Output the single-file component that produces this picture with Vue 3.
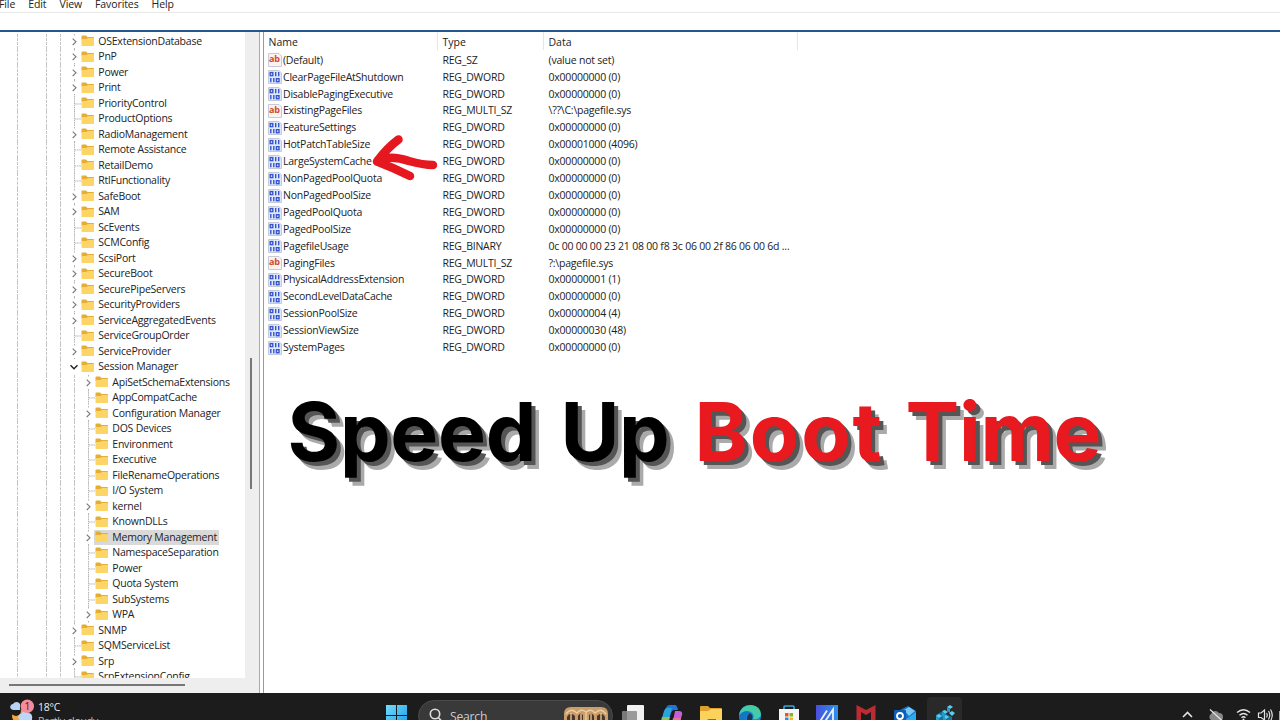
<template>
  <div class="screen">
    <!-- Menu -->
    <nav class="menu">
      <span v-for="m in menu" :key="m">{{ m }}</span>
    </nav>
    <div class="address"></div>

    <main class="panes">
      <!-- Key tree -->
      <aside class="left">
        <div class="tree-wrap">
          <div class="tree">
            <div v-for="(k, i) in keys" :key="i" class="key">
              <i class="guide wide"></i>
              <i class="guide"></i>
              <i class="guide"></i>
              <i v-if="k.child" class="guide"></i>
              <svg class="node" viewBox="0 0 14 15.51">
                <path v-if="k.state === 'open'" d="M3.5 6.2L7 9.7L10.5 6.2" class="chev open" />
                <template v-else-if="k.state === 'closed'">
                  <path d="M7.5 0v1.5M7.5 14v1.5" class="dots" />
                  <path d="M5.7 4.6L9 7.8L5.7 11" class="chev" />
                </template>
                <path v-else d="M7.5 0V15.5M8 8H14" class="dots" />
              </svg>
              <span class="label" :class="{ selected: k.name === 'Memory Management' }">
                <svg class="folder" viewBox="0 0 14 12">
                  <path d="M.5 1.3Q.5 .5 1.3 .5H5L6.5 2H12.2Q13 2 13 2.8V5H.5Z" fill="#e6ad35" />
                  <path d="M.5 4H5.5L6.8 3H12.2Q13 3 13 3.8V10.2Q13 11 12.2 11H1.3Q.5 11 .5 10.2Z" fill="#fdd566" />
                </svg>
                {{ k.name }}
              </span>
            </div>
          </div>
          <div class="vscroll"><div class="thumb"></div></div>
        </div>
        <div class="hscroll"><div class="thumb"></div></div>
      </aside>

      <!-- Values -->
      <section class="right">
        <div class="row head">
          <span>Name</span>
          <span>Type</span>
          <span>Data</span>
        </div>
        <div v-for="v in values" :key="v[0]" class="row">
          <span class="name">
            <svg class="vicon" viewBox="0 0 14 14">
              <path d="M.5 .5H11L13.5 3V13.5H.5Z" :fill="isText(v) ? '#fbf3f0' : '#dfe8fb'" stroke="#c5cad6" />
              <text v-if="isText(v)" x="1" y="9.3" class="ab">ab</text>
              <g v-else fill="none" stroke="#3555d0" stroke-width="1.4">
                <rect x="2.2" y="2.6" width="2.6" height="3" />
                <path d="M7.7 2V6.3M10.7 2V6.3M2.8 8V12.3M5.8 8V12.3" />
                <rect x="8.4" y="8.7" width="2.6" height="3" />
              </g>
            </svg>
            {{ v[0] }}
          </span>
          <span>{{ v[1] }}</span>
          <span class="data">{{ v[2] }}</span>
        </div>
      </section>
    </main>

    <!-- Taskbar -->
    <footer class="taskbar">
      <div class="weather">
        <svg width="26" height="22" viewBox="0 0 26 22">
          <circle cx="9" cy="17" r="7" fill="#f5a63b" />
          <circle cx="6" cy="12" r="5" fill="#1c1c1c" />
          <path d="M1 10a3 3 0 0 1 2-5a4 4 0 0 1 7 0v6H3z" fill="#b9d3f4" />
          <path d="M9 20a3 3 0 0 1 2-5a5 5 0 0 1 8-1q4 1 3 6v2H11z" fill="#bcd6f7" />
          <circle cx="17.3" cy="7.3" r="6.7" fill="#f58b9b" />
          <text x="14.5" y="11" class="badge">1</text>
        </svg>
        <div class="forecast">
          <div>18°C</div>
          <div class="dim">Partly cloudy</div>
        </div>
      </div>

      <svg class="start" viewBox="0 0 21 21">
        <defs>
          <linearGradient id="win" x1="0" y1="0" x2="1" y2="1">
            <stop offset="0" stop-color="#73dcfb" />
            <stop offset="1" stop-color="#179be8" />
          </linearGradient>
        </defs>
        <path d="M0 0H10V10H0ZM11 0H21V10H11ZM0 11H10V21H0ZM11 11H21V21H11Z" fill="url(#win)" />
      </svg>

      <div class="search">
        <svg width="16" height="16" viewBox="0 0 16 16" fill="none" stroke="#ddd" stroke-width="1.6">
          <circle cx="7" cy="6" r="4.7" />
          <path d="M10.3 9.5L14 13.5" />
        </svg>
        <span>Search</span>
        <svg class="arch" width="46" height="22" viewBox="0 0 46 22">
          <path d="M1 22V8Q1 1 8 1H38Q45 1 45 8V22Z" fill="#c99d6c" />
          <path d="M4 22V11Q7 5 12 10V22ZM15 22V10Q17 6 20 9V22ZM26 22V9Q29 6 31 10V22ZM34 22V10Q39 5 42 11V22Z" fill="#4f3525" />
          <path d="M3 8Q8 1 14 7Q18 2 23 6Q28 2 32 7Q38 1 43 8M8 7V22M18 8V22M23 6V22M28 8V22M38 7V22" fill="none" stroke="#efcf9e" stroke-width="1.3" />
        </svg>
      </div>

      <div class="apps">
        <div class="app">
          <svg viewBox="0 0 22 22">
            <rect x="5" y="0" width="17" height="16" rx="1" fill="#f1f1f1" />
            <rect x="0" y="6" width="15" height="14" rx="1" fill="#8b8b8b" fill-opacity=".85" />
          </svg>
        </div>
        <div class="app">
          <svg viewBox="0 0 22 22">
            <path d="M5 3Q6 0 9 0H14Q16 0 17 5H13Q11 5 10 8L9 12H2Z" fill="#2473dd" />
            <path d="M3 6Q4 3 6 3H11L8 13H1Z" fill="#2aa5d9" />
            <path d="M1 12H9L7 20H3Q-1 18 1 12Z" fill="#8dc35f" />
            <path d="M14 6H18Q22 6 21 10L18 20H8Q11 20 12 16Z" fill="#c45fd6" />
            <path d="M12 13H20L18 21H8Q11 20 12 13Z" fill="#f0709a" />
          </svg>
        </div>
        <div class="app">
          <svg viewBox="0 0 22 22">
            <path d="M0 2Q0 1 1 1H8L10 3H21Q22 3 22 4V8H0Z" fill="#dfa02b" />
            <path d="M0 6H8L11 4H22V22H0Z" fill="#fdd25b" />
            <path d="M7 18V16Q7 14 9 14H16V22H7Z" fill="#2b83c9" />
          </svg>
        </div>
        <div class="app">
          <svg viewBox="0 0 22 22">
            <circle cx="11" cy="11" r="11" fill="#1689d5" />
            <path d="M0 10Q2 0 12 0Q22 1 22 10Q20 15 14 14Q16 10 12 7Q6 4 0 10Z" fill="#45cba5" />
            <path d="M0 11Q5 4 11 8Q7 9 7 15L9 22Q1 20 0 11Z" fill="#1277c6" />
            <path d="M11 8Q6 11 9 17Q14 21 20 16Q14 18 13 14Q15 11 11 8Z" fill="#1d3559" />
          </svg>
        </div>
        <div class="app">
          <svg viewBox="0 0 22 22">
            <path d="M6 5V2Q6 1 7 1H15Q16 1 16 2V5" fill="none" stroke="#36a6df" stroke-width="1.6" />
            <path d="M1 4H21V22H1Z" fill="#f5f5f5" />
            <path d="M7 8H10.5V11.5H7Z" fill="#f05128" />
            <path d="M11.5 8H15V11.5H11.5Z" fill="#7cb928" />
            <path d="M7 12.5H10.5V16H7Z" fill="#2094dc" />
            <path d="M11.5 12.5H15V16H11.5Z" fill="#f9b817" />
          </svg>
        </div>
        <div class="app">
          <svg viewBox="0 0 22 22">
            <defs>
              <linearGradient id="asus" x1="0" y1="0" x2="1" y2="0">
                <stop offset="0" stop-color="#4a4fdc" />
                <stop offset="1" stop-color="#2a92ee" />
              </linearGradient>
            </defs>
            <rect width="22" height="22" fill="url(#asus)" />
            <path d="M3 18L11 5.5M8 18L17 4.500V18" fill="none" stroke="#e9f2ff" stroke-width="1.8" />
          </svg>
        </div>
        <div class="app">
          <svg viewBox="0 0 22 22">
            <path d="M1.5 0L11 5L20.5 0V18L11 22L1.5 18ZM6 7V15L11 18L16 15V7L11 10Z" fill="#bd2b32" fill-rule="evenodd" />
          </svg>
        </div>
        <div class="app">
          <svg viewBox="0 0 22 22">
            <path d="M4 6L14 1L22 6V20H4Z" fill="#1975c7" />
            <path d="M10 5L15 2L21 6L15 11Z" fill="#73c9f5" />
            <path d="M11 15L22 7V22H8Z" fill="#2da9ee" />
            <rect x="0" y="5" width="12" height="13" rx="1" fill="#0d5eb6" />
            <circle cx="6" cy="11" r="3" fill="none" stroke="#fff" stroke-width="1.8" />
          </svg>
        </div>
        <div class="app active">
          <svg viewBox="0 0 22 22">
            <path d="M3 10L8 7L13 9L19 12V22H3Z" fill="#15739f" />
            <path d="M9 6L12 5L15 7L12 9ZM3 11L6 9L9 11L6 13ZM10 12L13 10L16 12L13 14ZM14 2L17 0L20 2L17 4ZM16 8L19 6L22 8L19 11Z" fill="#5ccdf1" />
            <path d="M9 6L12 9V13L9 11ZM14 2L17 4V8L14 6ZM10 12L13 14V19L10 17ZM3 11L6 13V18L3 16Z" fill="#259bc7" />
          </svg>
        </div>
      </div>

      <svg class="tray" width="98" height="24" viewBox="0 0 98 24" fill="none" stroke="#e4e4e4" stroke-width="1.4">
        <path d="M1 14L5.5 9.5L10 14" stroke-width="1.6" />
        <path d="M29 17a3.6 3.6 0 0 1 0-6a4.5 4.5 0 0 1 8-1q4 0 4 4q0 2-1 3z" fill="#888" stroke="none" />
        <path d="M28 6.5L41 18.5" stroke-width="1.3" />
        <path d="M55 9.5Q61.5 4 68 9.5M57.5 12.2Q61.5 8.7 65.5 12.2M59.5 14.7Q61.5 13 63.5 14.7" />
        <circle cx="61.5" cy="16.5" r="1" fill="#e4e4e4" stroke="none" />
        <path d="M76.5 10H79L82.5 7V17L79 14.5H76.5ZM84.5 10Q86 12 84.5 14.5M86.5 8Q89 12 86.5 16.5M88.5 6.5Q92 12 88.5 18" stroke-width="1.2" />
        <path d="M98 8V17" />
      </svg>
    </footer>

    <!-- Caption and pointer drawn over the window -->
    <div class="caption">
      <span>Speed</span>
      <span>Up</span>
      <span class="red boot">Boot</span>
      <span class="red">Time</span>
    </div>
    <svg class="arrow" width="80" height="60" viewBox="0 0 80 60">
      <path d="M32.5 14.5Q21 23 11 36.5Q28 43 44 51M12 35Q26 30 43 36Q57 40 67 40" />
    </svg>
  </div>
</template>

<script setup>
const menu = ["File", "Edit", "View", "Favorites", "Help"];

// ">" closed key with subkeys, "v" expanded key, "." nested level
const keys = [
  ">OSExtensionDatabase",
  ">PnP",
  ">Power",
  ">Print",
  "PriorityControl",
  "ProductOptions",
  ">RadioManagement",
  "Remote Assistance",
  "RetailDemo",
  "RtlFunctionality",
  ">SafeBoot",
  ">SAM",
  "ScEvents",
  "SCMConfig",
  ">ScsiPort",
  ">SecureBoot",
  ">SecurePipeServers",
  ">SecurityProviders",
  ">ServiceAggregatedEvents",
  "ServiceGroupOrder",
  ">ServiceProvider",
  "vSession Manager",
  ".>ApiSetSchemaExtensions",
  ".AppCompatCache",
  ".>Configuration Manager",
  ".DOS Devices",
  ".Environment",
  ".Executive",
  ".FileRenameOperations",
  ".I/O System",
  ".>kernel",
  ".KnownDLLs",
  ".>Memory Management",
  ".NamespaceSeparation",
  ".Power",
  ".Quota System",
  ".SubSystems",
  ".>WPA",
  ">SNMP",
  "SQMServiceList",
  ">Srp",
  "SrpExtensionConfig",
].map((s) => {
  const child = s.startsWith(".");
  const rest = child ? s.slice(1) : s;
  const state = rest[0] === ">" ? "closed" : rest[0] === "v" ? "open" : "leaf";
  return { child, state, name: state === "leaf" ? rest : rest.slice(1) };
});

const zero = "0x00000000 (0)";
const values = [
  ["(Default)", "REG_SZ", "(value not set)"],
  ["ClearPageFileAtShutdown", "REG_DWORD", zero],
  ["DisablePagingExecutive", "REG_DWORD", zero],
  ["ExistingPageFiles", "REG_MULTI_SZ", "\\??\\C:\\pagefile.sys"],
  ["FeatureSettings", "REG_DWORD", zero],
  ["HotPatchTableSize", "REG_DWORD", "0x00001000 (4096)"],
  ["LargeSystemCache", "REG_DWORD", zero],
  ["NonPagedPoolQuota", "REG_DWORD", zero],
  ["NonPagedPoolSize", "REG_DWORD", zero],
  ["PagedPoolQuota", "REG_DWORD", zero],
  ["PagedPoolSize", "REG_DWORD", zero],
  ["PagefileUsage", "REG_BINARY", "0c 00 00 00 23 21 08 00 f8 3c 06 00 2f 86 06 00 6d ..."],
  ["PagingFiles", "REG_MULTI_SZ", "?:\\pagefile.sys"],
  ["PhysicalAddressExtension", "REG_DWORD", "0x00000001 (1)"],
  ["SecondLevelDataCache", "REG_DWORD", zero],
  ["SessionPoolSize", "REG_DWORD", "0x00000004 (4)"],
  ["SessionViewSize", "REG_DWORD", "0x00000030 (48)"],
  ["SystemPages", "REG_DWORD", zero],
];

function isText(v) {
  return v[1].endsWith("SZ");
}
</script>

<style>
body {
  margin: 0;
  overflow: hidden;
}
</style>

<style scoped>
.screen {
  position: relative;
  display: flex;
  flex-direction: column;
  width: 1280px;
  height: 720px;
  overflow: hidden;
  background: #fff;
  color: #222;
  font-family: "Open Sans", "Noto Sans", sans-serif;
  font-size: 10.5px;
  letter-spacing: -0.23px;
  white-space: nowrap;
}

/* Menu */
.menu {
  display: flex;
  gap: 13px;
  box-sizing: border-box;
  height: 13px;
  margin-left: -1px;
  line-height: 9px;
  letter-spacing: -0.1px;
  border-bottom: 1px solid #e8e8e8;
}
.address {
  box-sizing: border-box;
  height: 19px;
  border-bottom: 2px solid #22598c;
}

/* Tree */
.panes {
  display: flex;
  height: 661px;
}
.left {
  display: flex;
  flex-direction: column;
  box-sizing: border-box;
  width: 260px;
  background: #eee;
  border-right: 1px solid #a5a9b1;
}
.tree-wrap {
  display: flex;
  height: 646px;
  overflow: hidden;
}
.tree {
  width: 245px;
  padding-top: 1.7px;
  background: #fff;
  overflow: hidden;
}
.key {
  display: flex;
  height: 15.51px;
  padding-left: 17px;
  line-height: 15.5px;
}
.guide {
  box-sizing: border-box;
  width: 14px;
  border-left: 1px dashed #c4c4c4;
}
.guide.wide {
  width: 29px;
}
.guide:nth-child(3) {
  width: 7px;
}
.guide:nth-child(4) {
  margin-left: 7px;
  width: 7px;
}
.node {
  width: 14px;
  height: 15.51px;
}
.dots {
  fill: none;
  stroke: #b4b4b4;
  stroke-dasharray: 1.5 0.7;
}
.chev {
  fill: none;
  stroke: #777;
  stroke-width: 1.1;
}
.chev.open {
  stroke: #222;
  stroke-width: 1.4;
}
.label {
  display: flex;
  align-items: center;
  gap: 3.3px;
  margin-left: -1px;
  padding: 0 2px 0 1px;
}
.label.selected {
  background: #d9d9d9;
}
.folder {
  width: 14px;
  height: 12px;
}
.vscroll {
  width: 14px;
}
.vscroll .thumb {
  width: 2px;
  height: 131px;
  margin: 326px 0 0 5px;
  background: #777;
}
.hscroll .thumb {
  width: 176px;
  height: 2px;
  margin: 6px 0 0 9px;
  background: #777;
}

/* Values */
.right {
  flex: 1;
  margin-left: 3px;
  border-left: 1px solid #8f9cac;
}
.row {
  display: grid;
  grid-template-columns: 174px 106px 254px;
  height: 16.92px;
  line-height: 17.4px;
}
.row > span {
  padding-left: 4.5px;
}
.row > .data {
  letter-spacing: -0.21px;
}
.row.head {
  height: 19.7px;
  line-height: 21px;
  letter-spacing: 0;
}
.row.head > span {
  height: 18px;
  border-right: 1px solid #e5e5e5;
}
.row > .name {
  display: flex;
  align-items: center;
  gap: 1px;
  padding-left: 4px;
}
.vicon {
  width: 14px;
  height: 14px;
}
.ab {
  font-size: 9px;
  font-weight: 700;
  fill: #d2492f;
}

/* Taskbar */
.taskbar {
  display: flex;
  align-items: flex-start;
  height: 27px;
  background: #1c1c1c;
  color: #eee;
  overflow: hidden;
}
.weather {
  display: flex;
  gap: 2px;
  width: 376px;
  padding: 6px 0 0 10px;
}
.forecast {
  line-height: 14px;
  padding-top: 1px;
}
.dim {
  color: #bbb;
}
.badge {
  font-size: 10px;
  fill: #3b2026;
}
.start {
  width: 21px;
  height: 21px;
  margin-top: 12px;
}
.search {
  display: flex;
  align-items: center;
  box-sizing: border-box;
  width: 195px;
  height: 32px;
  margin: 7px 0 0 11px;
  padding-left: 9px;
  background: #393939;
  border: 1px solid #4a4a4a;
  border-radius: 16px;
  color: #ccc;
  font-size: 12.2px;
}
.search span {
  width: 113px;
  padding-left: 6px;
}
.arch {
  margin-top: 2px;
}
.apps {
  display: grid;
  grid-template-columns: repeat(9, 38.9px);
  margin-left: 0.5px;
}
.app {
  display: flex;
  justify-content: center;
  box-sizing: border-box;
  height: 34px;
  margin: 4px 2px 0;
  padding-top: 8px;
  border-radius: 4px;
}
.app svg {
  width: 22px;
  height: 22px;
}
.app.active {
  background: #292929;
}
.tray {
  margin: 10px 0 0 auto;
}

/* Overlays */
.caption {
  position: absolute;
  left: 287.5px;
  top: 376px;
  display: grid;
  grid-template-columns: 273px 134px 211px auto;
  color: #000;
  font-family: Inter, "Open Sans", sans-serif;
  font-size: 80.5px;
  font-weight: 700;
  line-height: 112px;
  letter-spacing: -0.3px;
  text-shadow: 4px 4px 0 #555, 7.5px 7.5px 0 #aaa;
}
.caption .red {
  color: #e8191f;
}
.caption .boot {
  letter-spacing: 2px;
}
.arrow {
  position: absolute;
  left: 366px;
  top: 125px;
  fill: none;
  stroke: #e5171f;
  stroke-width: 8.5;
  stroke-linecap: round;
  stroke-linejoin: round;
}
</style>
